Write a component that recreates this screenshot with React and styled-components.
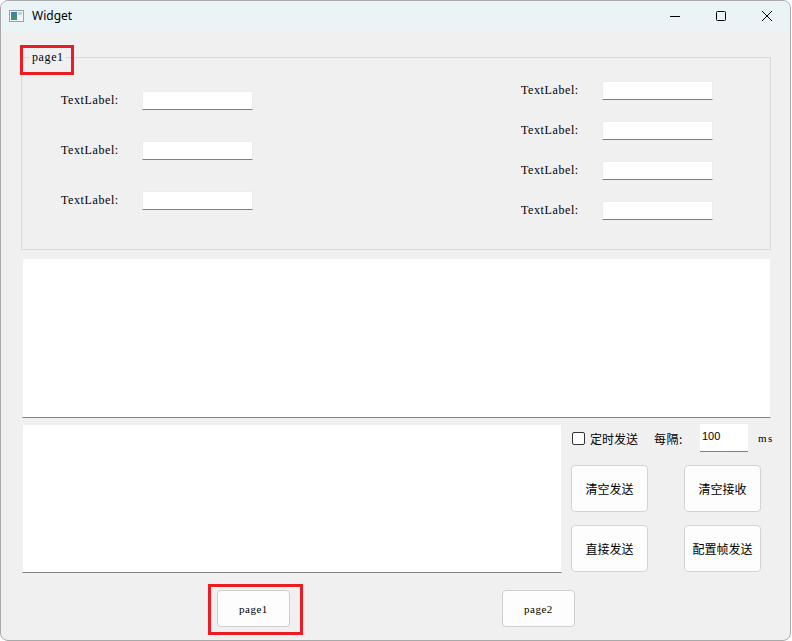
import React from 'react';
import styled, { createGlobalStyle } from 'styled-components';

const Global = createGlobalStyle`
  html, body {
    margin: 0;
    padding: 0;
    background: #ffffff;
  }
`;

const Window = styled.div`
  width: 791px;
  height: 641px;
  box-sizing: border-box;
  border: 1px solid #a9a9a9;
  border-radius: 8px;
  overflow: hidden;
  background: #f0f0f0;
  display: flex;
  flex-direction: column;
`;

const TitleBar = styled.div`
  height: 30px;
  background: #eaf4f7;
  display: flex;
  align-items: center;
  padding-left: 8px;
  font-family: "Noto Sans", "Liberation Sans", sans-serif;
  font-size: 12px;
  color: #000;
`;

const AppTitle = styled.span`
  margin-left: 8px;
  margin-top: -2px;
`;

const Controls = styled.div`
  margin-left: auto;
  display: flex;
  height: 100%;
`;

const ControlButton = styled.div`
  width: 46px;
  height: 100%;
  display: flex;
  align-items: center;
  justify-content: center;
`;

const Body = styled.div`
  flex: 1;
  display: flex;
  flex-direction: column;
  padding: 26px 19px 0 20px;
`;

const Group = styled.div`
  position: relative;
  height: 193px;
  box-sizing: border-box;
  border: 1px solid #dadada;
  display: grid;
  grid-template-columns: 460px auto;
  padding-left: 39px;
`;

const serif = `"Liberation Serif", "DejaVu Serif", serif`;

const GroupTitle = styled.span`
  position: absolute;
  top: -7px;
  left: 8px;
  padding: 0 2px;
  background: #f0f0f0;
  font-family: ${serif};
  font-size: 12px;
  letter-spacing: 0.6px;
  line-height: 12px;
  color: #000;
`;

const Marker = styled.div`
  position: absolute;
  border: 3px solid #ec1c24;
  box-sizing: border-box;
  pointer-events: none;
  left: ${p => p.$left}px;
  top: ${p => p.$top}px;
  width: ${p => p.$w}px;
  height: ${p => p.$h}px;
`;

const Column = styled.div`
  display: flex;
  flex-direction: column;
  gap: ${p => p.$gap}px;
  padding-top: ${p => p.$top}px;
`;

const Row = styled.div`
  display: flex;
  align-items: center;
  height: 19px;
`;

const Label = styled.span`
  width: 81px;
  font-family: ${serif};
  font-size: 12px;
  letter-spacing: 0.6px;
  color: #000;
`;

const LineEdit = styled.div`
  width: 111px;
  height: 19px;
  box-sizing: border-box;
  background: #fff;
  border: 1px solid #ececec;
  border-bottom-color: #808080;
`;

const TextArea = styled.div`
  background: #fff;
  box-sizing: border-box;
  border: 1px solid #f0f0f0;
  border-bottom: 1px solid #808080;
  margin-left: 1px;
  width: ${p => p.$w};
  height: ${p => p.$h}px;
`;

const Split = styled.div`
  display: flex;
  margin-top: 6px;
  gap: 9px;
`;

const Panel = styled.div`
  display: flex;
  flex-direction: column;
  width: 200px;
`;

const OptionRow = styled.div`
  display: flex;
  align-items: center;
  height: 28px;
  font-family: "Noto Sans CJK SC", "Noto Sans", sans-serif;
  font-size: 12px;
  color: #000;
`;

const Check = styled.span`
  width: 11px;
  height: 11px;
  border: 1px solid #333;
  border-radius: 2px;
  background: #fff;
  margin: 1px 5px 0 1px;
`;

const Every = styled.span`
  margin-left: 16px;
  letter-spacing: 0.5px;
`;

const SpinEdit = styled.div`
  width: 48px;
  height: 28px;
  box-sizing: border-box;
  margin-left: auto;
  padding: 6px 0 0 2px;
  background: #fff;
  border-bottom: 1px solid #808080;
  font-family: "Liberation Sans", sans-serif;
  font-size: 11px;
`;

const Unit = styled.span`
  width: 13px;
  margin-left: 10px;
  font-family: ${serif};
  font-size: 11px;
  letter-spacing: 1.5px;
  white-space: nowrap;
`;

const ButtonGrid = styled.div`
  display: grid;
  grid-template-columns: 77px 77px;
  column-gap: 36px;
  row-gap: 13px;
  margin-top: 13px;
`;

const ActionButton = styled.div`
  height: 47px;
  box-sizing: border-box;
  border: 1px solid #d3d3d3;
  border-radius: 4px;
  background: #fdfdfd;
  display: flex;
  align-items: center;
  justify-content: center;
  font-family: "Noto Sans CJK SC", "Noto Sans", sans-serif;
  font-size: 12px;
  color: #000;
`;

const PageBar = styled.div`
  display: flex;
  margin-top: 17px;
  padding-left: 196px;
  gap: 212px;
`;

const PageSlot = styled.div`
  position: relative;
`;

const PageButton = styled.div`
  width: 73px;
  height: 37px;
  box-sizing: border-box;
  border: 1px solid #cfcfcf;
  border-radius: 4px;
  background: #fdfdfd;
  display: flex;
  align-items: center;
  justify-content: center;
  font-family: ${serif};
  font-size: 11px;
  letter-spacing: 0.5px;
  color: #000;
`;

const AppIcon = () => (
  <svg width="15" height="12" viewBox="0 0 15 12">
    <rect x="0.5" y="0.5" width="14" height="11" fill="#f4f4f4" stroke="#9aa3a8" />
    <defs>
      <linearGradient id="ig" x1="0" y1="0" x2="0" y2="1">
        <stop offset="0" stopColor="#3d7fb5" />
        <stop offset="1" stopColor="#3f9a62" />
      </linearGradient>
    </defs>
    <rect x="2" y="2" width="6" height="8" fill="url(#ig)" />
    <rect x="9" y="2" width="4" height="3" fill="#c9cfd3" />
  </svg>
);

const leftRows = [0, 1, 2];
const rightRows = [0, 1, 2, 3];

export default function App() {
  return (
    <>
      <Global />
      <Window>
        <TitleBar>
          <AppIcon />
          <AppTitle>Widget</AppTitle>
          <Controls>
            <ControlButton>
              <svg width="12" height="12" viewBox="0 0 12 12">
                <line x1="1" y1="6.5" x2="11" y2="6.5" stroke="#000" strokeWidth="1" />
              </svg>
            </ControlButton>
            <ControlButton>
              <svg width="12" height="12" viewBox="0 0 12 12">
                <rect x="1.5" y="1.5" width="9" height="9" rx="1" fill="none" stroke="#000" strokeWidth="1" />
              </svg>
            </ControlButton>
            <ControlButton>
              <svg width="12" height="12" viewBox="0 0 12 12">
                <path d="M1 1L11 11M11 1L1 11" stroke="#000" strokeWidth="1" />
              </svg>
            </ControlButton>
          </Controls>
        </TitleBar>
        <Body>
          <Group>
            <GroupTitle>page1</GroupTitle>
            <Marker $left={-2} $top={-13} $w={54} $h={30} />
            <Column $top={33} $gap={31}>
              {leftRows.map(i => (
                <Row key={i}>
                  <Label>TextLabel:</Label>
                  <LineEdit />
                </Row>
              ))}
            </Column>
            <Column $top={23} $gap={21}>
              {rightRows.map(i => (
                <Row key={i}>
                  <Label>TextLabel:</Label>
                  <LineEdit />
                </Row>
              ))}
            </Column>
          </Group>
          <TextArea $w="749px" $h={160} style={{ marginTop: 8 }} />
          <Split>
            <TextArea $w="540px" $h={149} />
            <Panel>
              <OptionRow>
                <Check />
                <span>定时发送</span>
                <Every>每隔:</Every>
                <SpinEdit>100</SpinEdit>
                <Unit>ms</Unit>
              </OptionRow>
              <ButtonGrid>
                <ActionButton>清空发送</ActionButton>
                <ActionButton>清空接收</ActionButton>
                <ActionButton>直接发送</ActionButton>
                <ActionButton>配置帧发送</ActionButton>
              </ButtonGrid>
            </Panel>
          </Split>
          <PageBar>
            <PageSlot>
              <PageButton>page1</PageButton>
              <Marker $left={-9} $top={-6} $w={95} $h={51} />
            </PageSlot>
            <PageSlot>
              <PageButton>page2</PageButton>
            </PageSlot>
          </PageBar>
        </Body>
      </Window>
    </>
  );
}
